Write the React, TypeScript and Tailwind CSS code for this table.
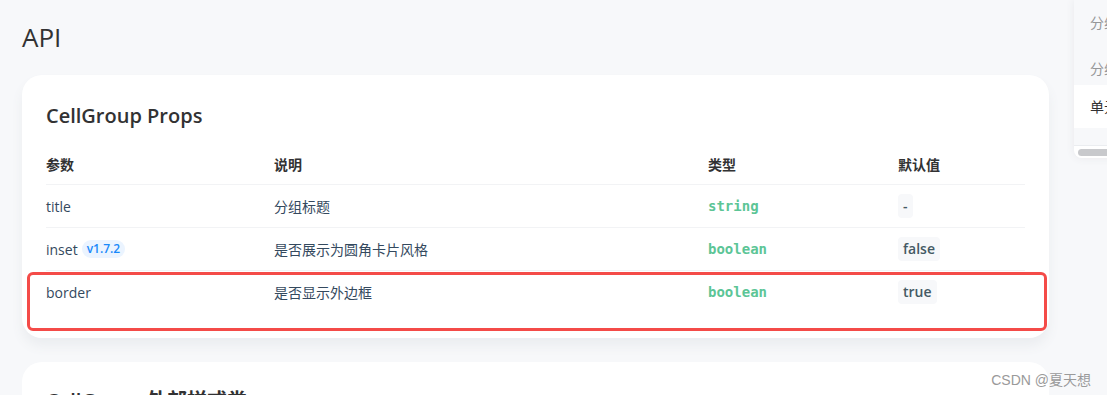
import React from "react";

const rows = [
  { name: "title", desc: "分组标题", type: "string", def: "-" },
  { name: "inset", version: "v1.7.2", desc: "是否展示为圆角卡片风格", type: "boolean", def: "false" },
  { name: "border", desc: "是否显示外边框", type: "boolean", def: "true" },
];

const sans = "font-['Open_Sans','Noto_Sans_CJK_SC',sans-serif]";

export default function App() {
  return (
    <div className={`relative h-[395px] w-[1107px] overflow-hidden bg-[#f7f8fa] ${sans}`}>
      <div className="w-[1049px] pl-[22px]">
        <h2 className="pt-[19px] text-[26px] leading-[36px] font-normal text-[#323233]">API</h2>

        {/* Props card */}
        <div className="relative mt-[20px] rounded-[20px] bg-white px-[24px] pt-[27px] pb-[24px] shadow-[0_8px_12px_#ebedf0]">
          <h3 className="text-[20px] leading-[28px] font-semibold text-[#323233]">CellGroup Props</h3>

          <table className="mt-[24px] w-full border-collapse text-[14px]">
            <thead>
              <tr className="border-b border-[#f2f3f5] text-left">
                <th className="w-[228px] pb-[9px] font-semibold text-[#323233]">参数</th>
                <th className="w-[434px] pb-[9px] font-semibold text-[#323233]">说明</th>
                <th className="w-[190px] pb-[9px] font-semibold text-[#323233]">类型</th>
                <th className="pb-[9px] font-semibold text-[#323233]">默认值</th>
              </tr>
            </thead>
            <tbody>
              {rows.map((r, i) => (
                <tr
                  key={r.name}
                  className={i < rows.length - 1 ? "h-[43px] border-b border-[#f2f3f5]" : "h-[43px]"}
                >
                  <td className="text-[#34495e]">
                    <span className="inline-flex items-center gap-[4px]">
                      {r.name}
                      {r.version && (
                        <span className="rounded-full bg-[#ebf4ff] px-[5px] py-[0px] text-[12px] leading-[18px] font-semibold text-[#1989fa]">
                          {r.version}
                        </span>
                      )}
                    </span>
                  </td>
                  <td className="text-[#34495e]">{r.desc}</td>
                  <td className="font-['DejaVu_Sans_Mono',monospace] text-[14px] font-bold text-[#5cc596]">
                    {r.type}
                  </td>
                  <td>
                    <span className="inline-block rounded-[4px] bg-[#f7f8fa] px-[5px] py-[2px] text-[14px] leading-[20px] font-semibold text-[#455a64]">
                      {r.def}
                    </span>
                  </td>
                </tr>
              ))}
            </tbody>
          </table>

          {/* highlight annotation */}
          <div className="pointer-events-none absolute top-[197px] left-[5px] h-[59px] w-[1020px] rounded-[6px] border-[3px] border-[#f44b48]"></div>
        </div>

        {/* next card */}
        <div className="mt-[24px] rounded-[20px] bg-white px-[24px] pt-[25px]">
          <h3 className="text-[20px] leading-[28px] font-semibold text-[#323233]">CellGroup 外部样式类</h3>
        </div>
      </div>

      {/* right side nav */}
      <div className="absolute top-0 left-[1074px] w-[60px] overflow-hidden rounded-bl-[8px] bg-[#f7f8fa] text-[14px] shadow-[0_0_8px_#e8e9ec]">
        <div className="h-[44px] pt-[12px] pl-[16px] text-[#969799]">分组</div>
        <div className="h-[41px] pt-[14px] pl-[16px] text-[#969799]">分组</div>
        <div className="h-[43px] bg-white pt-[11px] pl-[16px] text-[#323233]">单元</div>
        <div className="h-[18px] border-b border-[#ebedf0] bg-[#f7f8fa]"></div>
        <div className="h-[12px] bg-white pt-[3px] pl-[4px]">
          <div className="h-[7px] rounded-l-full bg-[#c8c9cc]"></div>
        </div>
      </div>

      <div className="absolute right-[16px] bottom-[4px] text-[14px] text-[#9a9a9a] font-['Liberation_Sans','Noto_Sans_CJK_SC',sans-serif]">
        CSDN @夏天想
      </div>
    </div>
  );
}
